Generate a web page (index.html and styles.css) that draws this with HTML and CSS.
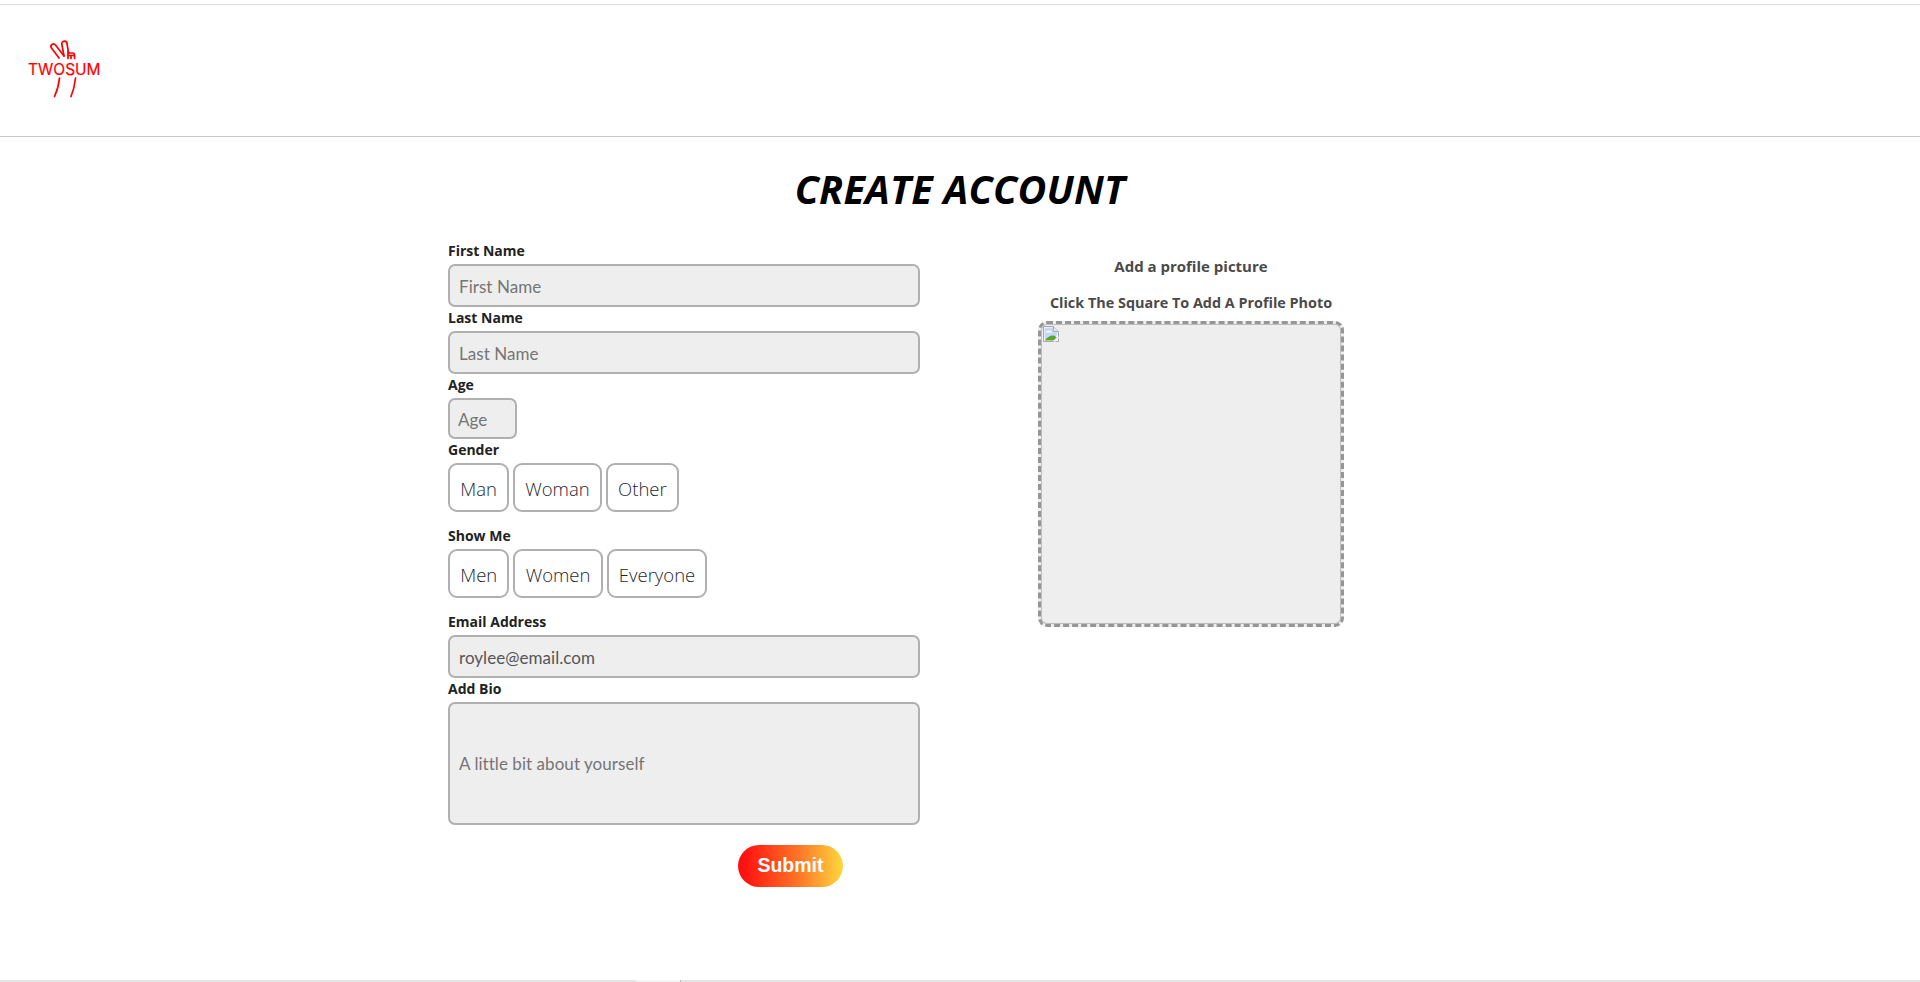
FILE: index.html
```html
<!DOCTYPE html>
<html lang="en">
<head>
<meta charset="utf-8">
<title>Create Account</title>
<link rel="stylesheet" href="styles.css">
</head>
<body>
<div class="page">
  <header class="topbar">
    <svg class="logo" viewBox="0 0 90 70" width="90" height="70" aria-label="Twosum">
      <g fill="none" stroke="#f00" stroke-width="1.7" stroke-linecap="round" stroke-linejoin="round">
        <path d="M39 27 L31.500 17 A2.500 2.500 0 0 1 35.500 14 L44 25"/>
        <path d="M44 25 L41.800 13 A2.600 2.600 0 0 1 47 12.500 L48.500 22"/>
        <path d="M48 20.500 L48 27.500 M48 24.500 L53.500 24.500 M48 22 L52.500 22 Q54.500 22 54.500 24 L54.500 27.500 M51 24.500 L51 27.500"/>
        <path d="M39.500 47 Q38.500 57 34.500 65.500"/>
        <path d="M55.500 47 Q54.500 57 51 65.500"/>
      </g>
      <text class="logo-text" x="8" y="44">TWOSUM</text>
    </svg>
  </header>
  <main class="content">
    <h1 class="title">CREATE ACCOUNT</h1>
    <form class="columns">
      <div class="col-left">
        <label class="field-label" for="first">First Name</label>
        <input class="text-input" id="first" type="text" placeholder="First Name">
        <label class="field-label" for="last">Last Name</label>
        <input class="text-input" id="last" type="text" placeholder="Last Name">
        <label class="field-label" for="age">Age</label>
        <input class="text-input age-input" id="age" type="text" placeholder="Age">
        <div class="field-label">Gender</div>
        <div class="choice-row">
          <span class="choice">Man</span>
          <span class="choice">Woman</span>
          <span class="choice">Other</span>
        </div>
        <div class="field-label">Show Me</div>
        <div class="choice-row">
          <span class="choice">Men</span>
          <span class="choice">Women</span>
          <span class="choice">Everyone</span>
        </div>
        <label class="field-label" for="email">Email Address</label>
        <input class="text-input email-input" id="email" type="text" value="roylee@email.com">
        <label class="field-label" for="bio">Add Bio</label>
        <textarea class="text-input bio-input" id="bio" placeholder="A little bit about yourself"></textarea>
        <button class="submit" type="button">Submit</button>
      </div>
      <div class="col-right">
        <p class="pic-heading">Add a profile picture</p>
        <p class="pic-hint">Click The Square To Add A Profile Photo</p>
        <div class="pic-box">
          <svg class="broken" viewBox="0 0 16 16" width="16" height="16" aria-hidden="true">
            <path d="M0.500 0.500 H10.500 L15.500 5.500 V15.500 H0.500 Z" fill="#fff" stroke="#a9a9a9"/>
            <path d="M1.500 1.500 H10 V5.500 H14.500 V9 L10 12 L1.500 13 Z" fill="#c6d8f5"/>
            <path d="M3 6 Q5 3.500 7.500 5 Q9.500 5.500 9 6.500 H3 Z" fill="#fff"/>
            <path d="M1.500 14.500 Q6 9 11 9.500 L14 11.500 L11 14.500 Z" fill="#55a530"/>
            <path d="M10.500 0.500 V5.500 H15.500" fill="#e8e8e8" stroke="#a9a9a9"/>
            <path d="M11 15.500 L15.500 11" stroke="#eee" stroke-width="2"/>
          </svg>
        </div>
      </div>
    </form>
  </main>
  <footer class="bottombar">
    <span class="bar-a"></span><span class="bar-b"></span><span class="bar-c"></span><span class="bar-d"></span>
  </footer>
</div>
</body>
</html>
```
FILE: styles.css
```css
* { box-sizing: border-box; }
html, body { margin: 0; padding: 0; background: #fff; }
body { font-family: "Open Sans", "Liberation Sans", sans-serif; }
.page { height: 982px; display: flex; flex-direction: column; overflow: hidden; }
.topbar {
  margin-top: 4px;
  height: 133px;
  border-top: 1px solid #ddd;
  border-bottom: 1px solid #c6c6c6;
  padding: 26px 0 0 20px;
  flex: none;
}
.logo { display: block; }
.logo-text { font-family: Inter, "Liberation Sans", sans-serif; font-size: 15.500px; font-weight: 400; fill: #f00; stroke: #f00; stroke-width: 0.2px; }
.content { flex: 1; display: flex; flex-direction: column; }
.title {
  margin: 28px 0 0;
  height: 49px;
  line-height: 48px;
  text-align: center;
  font-size: 39.500px;
  font-weight: 700;
  font-style: italic;
  color: #000;
  letter-spacing: 0.25px;
}
.columns { display: flex; gap: 118px; padding: 26px 0 0 448px; }
.col-left { width: 472px; display: flex; flex-direction: column; align-items: flex-start; }
.col-right { width: 306px; display: flex; flex-direction: column; align-items: center; }
.field-label { display: block; height: 24px; line-height: 22px; font-size: 14px; font-weight: 700; color: #222; }
.text-input {
  display: block;
  width: 472px;
  height: 43px;
  border: 2px solid #b0b0b0;
  border-radius: 7px;
  background: #eee;
  padding: 1px 9px 0;
  margin: 0;
  font-family: Lato, sans-serif;
  font-size: 17px;
  letter-spacing: 0.05px;
  color: #555;
  outline: none;
}
.text-input::placeholder { color: #757575; opacity: 1; }
.age-input { width: 69px; height: 41px; padding: 1px 8px 0; }
.bio-input { height: 123px; padding-top: 50px; resize: none; overflow: hidden; line-height: 20px; }
.choice-row { display: flex; gap: 4px; margin-bottom: 13px; }
.choice {
  height: 49px;
  line-height: 47px;
  padding: 0 10.200px;
  border: 2px solid #b0b0b0;
  border-radius: 9px;
  background: #fff;
  font-size: 18.500px;
  font-weight: 350;
  color: #1f1f30;
}
.submit {
  width: 105px;
  height: 42px;
  margin: 20px 0 0 290px;
  padding: 0 0 2px;
  border: 0;
  border-radius: 21px;
  background: linear-gradient(to right, #ff1010 5%, #ff7a28 60%, #ffd83c);
  color: #fff;
  font-family: "Liberation Sans", Arial, sans-serif;
  font-size: 19.500px;
  font-weight: 700;
}
.pic-heading, .pic-hint { margin: 0; text-align: center; font-weight: 700; color: #4a4a4a; }
.pic-heading { margin-top: 14px; line-height: 24px; font-size: 15px; }
.pic-hint { margin-top: 13px; line-height: 24px; font-size: 14.400px; }
.pic-box {
  margin-top: 6px;
  width: 306px;
  height: 306px;
  border: 3px dashed #969696;
  border-radius: 9px;
  background: #eee;
  box-shadow: inset 0 0 0 1px #bdbdbd;
  padding: 2px;
}
.broken { display: block; }
.bottombar { display: flex; height: 2px; flex: none; }
.bar-a { width: 636px; background: #e4e4e4; }
.bar-b { width: 44px; background: #f4f4f4; }
.bar-c { width: 1px; background: #bbb; }
.bar-d { flex: 1; background: #e4e4e4; }
```
